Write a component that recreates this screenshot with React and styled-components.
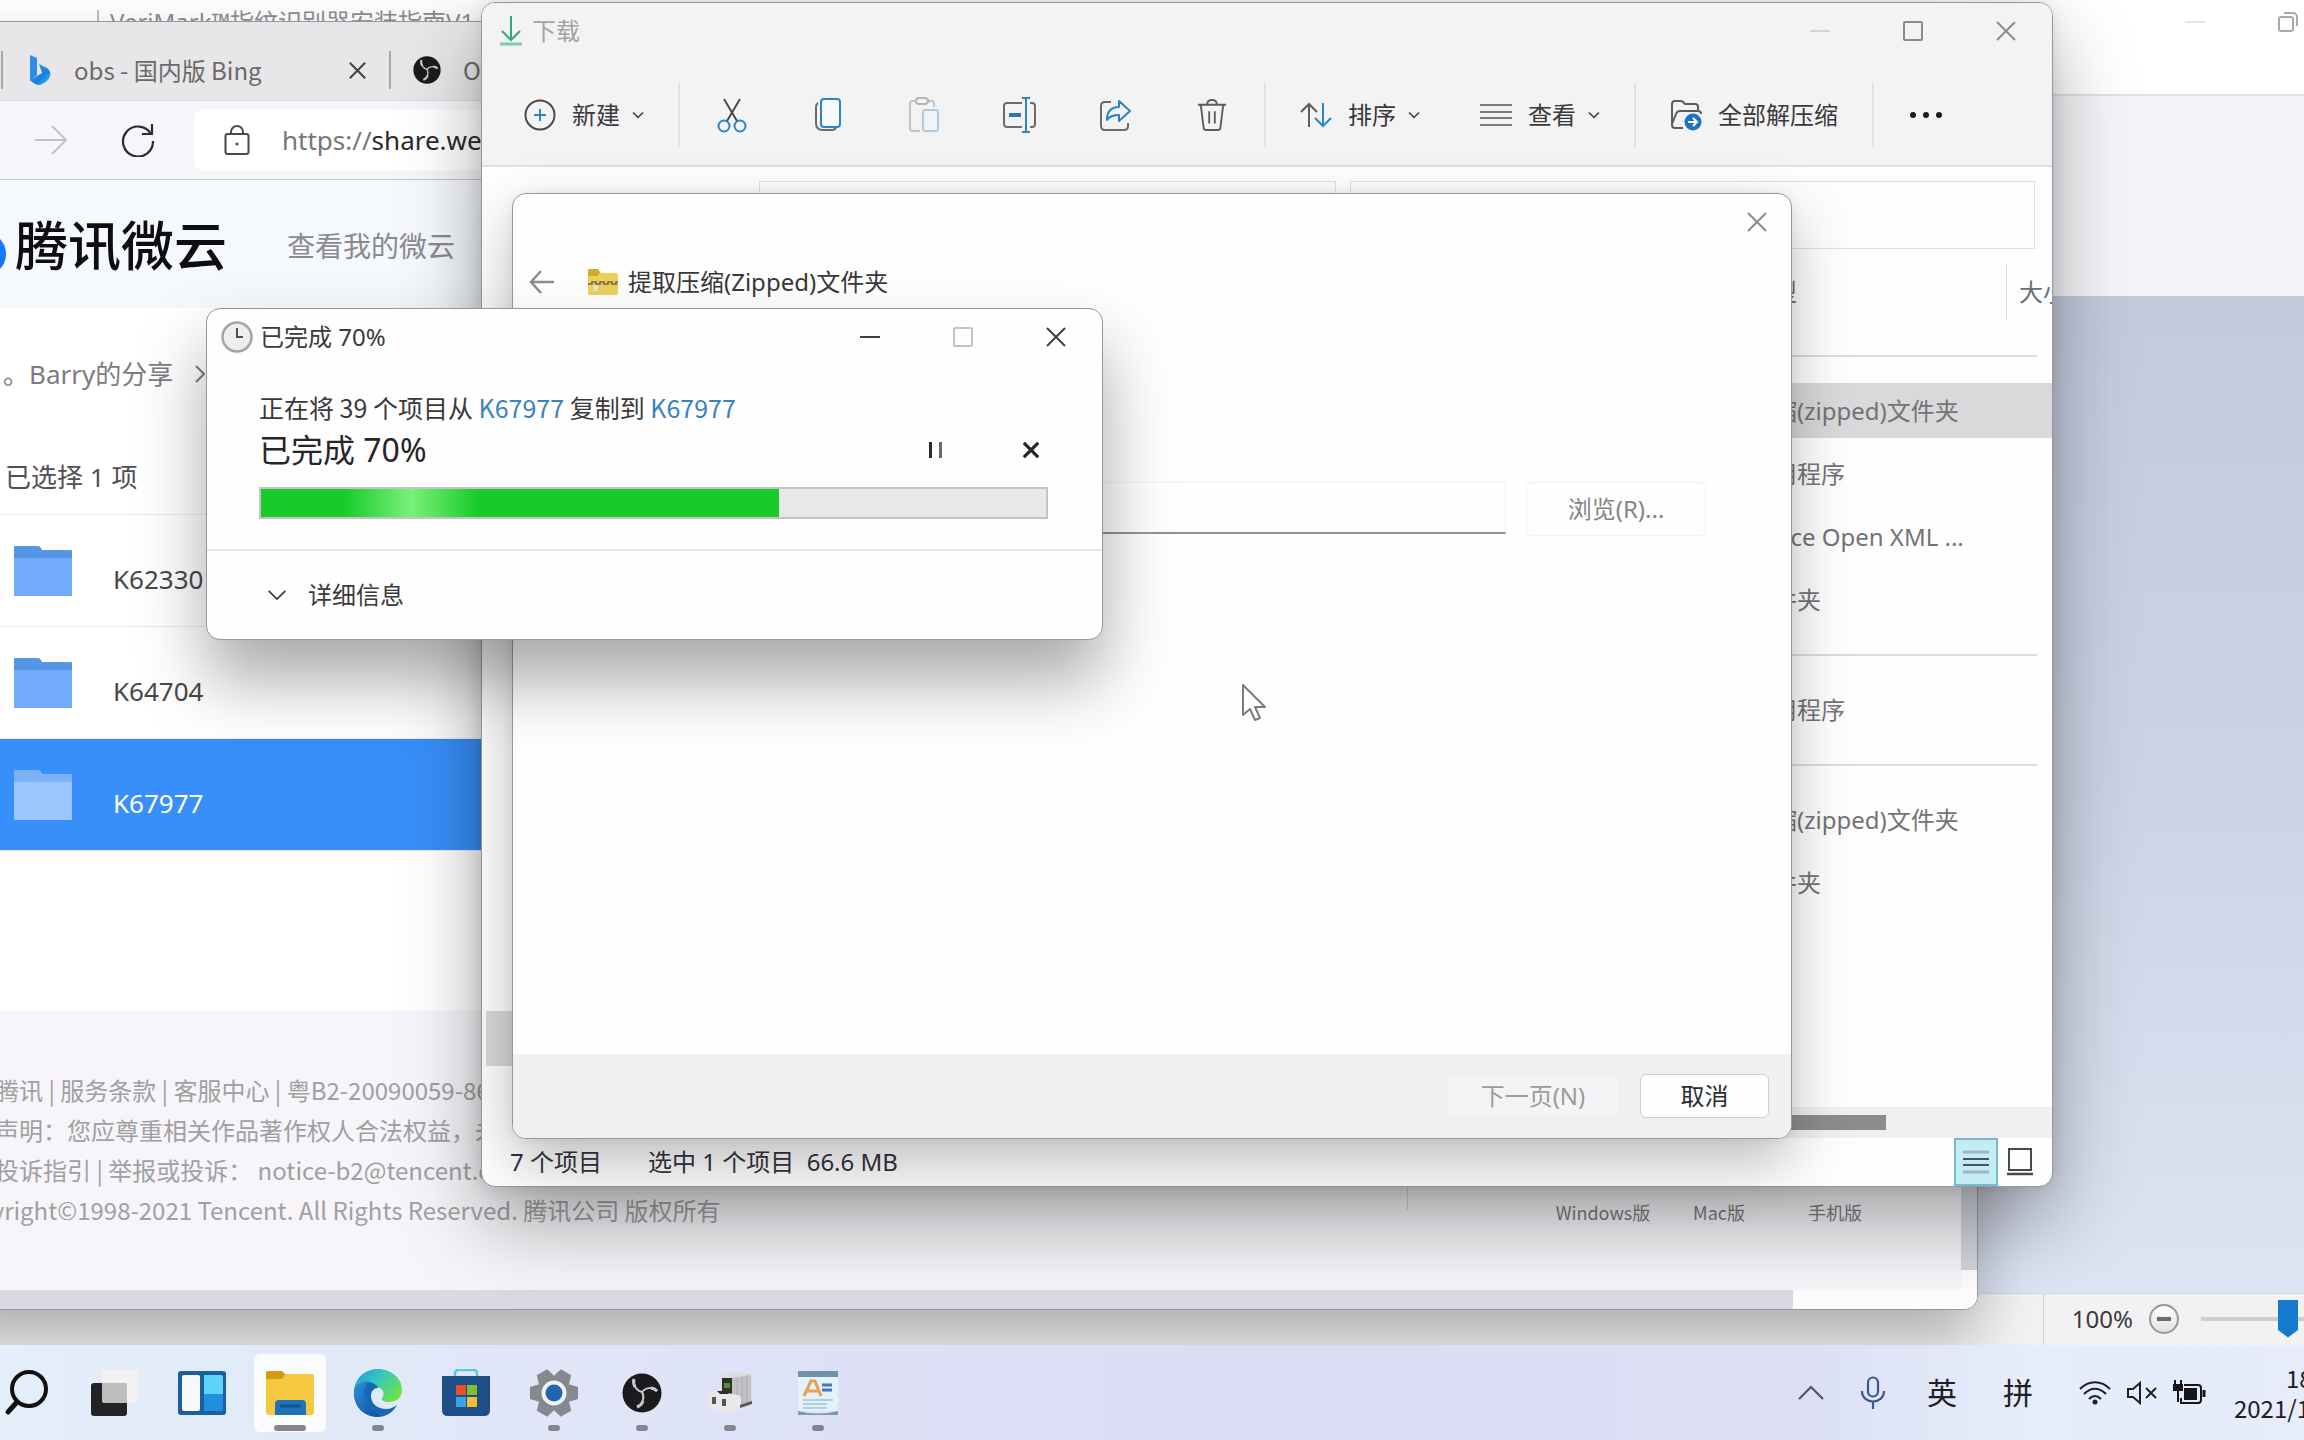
import styled, { createGlobalStyle, css } from "styled-components";

const FOLDERS = ["K62330", "K64704", "K67977"];

const GROUPS = [
  ["压缩(zipped)文件夹", "应用程序", "Office Open XML ...", "文件夹"],
  ["应用程序"],
  ["压缩(zipped)文件夹", "文件夹"],
];

/* ---------- icons ---------- */

const Minus = () => (
  <svg width="20" height="20" viewBox="0 0 20 20" fill="none" stroke="currentColor" strokeWidth="2">
    <path d="M0 10h20" />
  </svg>
);
const Square = () => (
  <svg width="20" height="20" viewBox="0 0 20 20" fill="none" stroke="currentColor" strokeWidth="2">
    <rect x="1" y="1" width="18" height="18" rx="1" />
  </svg>
);
const Restore = () => (
  <svg width="20" height="20" viewBox="0 0 20 20" fill="none" stroke="currentColor" strokeWidth="2">
    <rect x="1" y="5" width="14" height="14" rx="2" />
    <path d="M6 1h9a4 4 0 0 1 4 4v9" />
  </svg>
);
const Cross = ({ size = 20, weight = 2 }) => (
  <svg width={size} height={size} viewBox="0 0 20 20" fill="none" stroke="currentColor" strokeWidth={weight}>
    <path d="M1 1l18 18M19 1L1 19" />
  </svg>
);
const Chevron = ({ size = 12, weight = 1.5 }) => (
  <svg width={size} height={size} viewBox="0 0 12 12" fill="none" stroke="currentColor" strokeWidth={weight}>
    <path d="M1 3.5l5 5 5-5" />
  </svg>
);
const BingLogo = () => (
  <svg width="24" height="32" viewBox="0 0 24 32">
    <defs>
      <linearGradient id="bing" x1="0" y1="0" x2="1" y2="1">
        <stop offset="0" stopColor="#2fa8ef" />
        <stop offset="0.6" stopColor="#1b7fe0" />
        <stop offset="1" stopColor="#37c8f2" />
      </linearGradient>
    </defs>
    <path d="M2 1l7 3v17l-7 6z" fill="#2b8fe8" />
    <path d="M11 10l8 4c3 2 4 5 3 8-1 4-4 6-8 8-3 2-7 1-12-4l12-7-1-3z" fill="url(#bing)" />
  </svg>
);
const ObsLogo = ({ size = 28 }) => (
  <svg width={size} height={size} viewBox="0 0 40 40">
    <circle cx="20" cy="20" r="19.5" fill="#1b1a1c" />
    <g fill="none" stroke="#c9c7cb" strokeWidth="2">
      <path d="M20 19c-5-1-9-6-8-13" />
      <path d="M20 19c4-5 11-5 15-1" />
      <path d="M20 19c3 5 1 12-5 15" />
      <path d="M12 6c-1 3 0 6 1 8M35 18c-2-2-4-3-6-3M15 34c3-1 5-3 6-6" strokeWidth="3" />
    </g>
  </svg>
);
const ForwardArrow = () => (
  <svg width="32" height="30" viewBox="0 0 32 30" fill="none" stroke="#c4c2c6" strokeWidth="2">
    <path d="M0 15h31M17 1l14 14-14 14" />
  </svg>
);
const Reload = () => (
  <svg width="34" height="34" viewBox="0 0 34 34" fill="none" stroke="#2c2b2d" strokeWidth="2.2">
    <path d="M30 11A15 15 0 1 0 32 18" />
    <path d="M31 1v10H21" />
  </svg>
);
const Lock = () => (
  <svg width="26" height="32" viewBox="0 0 26 32" fill="none" stroke="#4a494b" strokeWidth="2">
    <rect x="1.500" y="10" width="23" height="20" rx="2" />
    <path d="M7 10V8a6 6 0 0 1 12 0v2" />
    <circle cx="13" cy="20" r="1.500" fill="#4a494b" stroke="none" />
  </svg>
);
const WeiyunLogo = () => (
  <svg width="60" height="60" viewBox="0 0 60 60">
    <circle cx="29" cy="38" r="22" fill="#1677ff" />
  </svg>
);
const BlueFolder = ({ faded }) => (
  <svg width="58" height="50" viewBox="0 0 58 50">
    <path d="M0 1q0-1 1-1h23q2 0 3 2l1 2h29q1 0 1 1v9H0z" fill={faded ? "#7db2f9" : "#5795e8"} />
    <path d="M0 12h58v37q0 1-1 1H1q-1 0-1-1z" fill={faded ? "#9cc4fd" : "#72abfb"} />
  </svg>
);
const DownloadArrow = () => (
  <svg width="22" height="30" viewBox="0 0 22 30" fill="none" stroke="#2fa884" strokeWidth="2">
    <path d="M11 0v24M2 15l9 9 9-9" />
    <path d="M0 28h22" stroke="#7fcab2" strokeWidth="3" />
  </svg>
);
const PlusCircle = () => (
  <svg width="32" height="32" viewBox="0 0 32 32" fill="none" strokeWidth="2">
    <circle cx="16" cy="16" r="14.500" stroke="#4a4a4a" />
    <path d="M16 10v12M10 16h12" stroke="#2a86c8" />
  </svg>
);
const Scissors = () => (
  <svg width="32" height="36" viewBox="0 0 32 36" fill="none" strokeWidth="2">
    <path d="M8 2l13 22M24 2L11 24" stroke="#4a4a4a" />
    <circle cx="8" cy="29" r="5.500" stroke="#2a86c8" />
    <circle cx="24" cy="29" r="5.500" stroke="#2a86c8" />
  </svg>
);
const Copy = () => (
  <svg width="28" height="36" viewBox="0 0 28 36" fill="none" strokeWidth="2">
    <path d="M4 6q-2 1-2 4v16q0 7 7 7h9q3 0 4-2" stroke="#6b6b6b" />
    <rect x="7" y="2" width="19" height="28" rx="3" stroke="#2a86c8" fill="#f8fbfd" />
  </svg>
);
const Paste = () => (
  <svg width="32" height="36" viewBox="0 0 32 36" fill="none" strokeWidth="2">
    <path d="M12 34H5q-3 0-3-3V7q0-3 3-3h3M20 4h4q2 0 2 3v3" stroke="#c2c2c2" />
    <rect x="8" y="1" width="12" height="6" rx="3" stroke="#b5b5b5" />
    <rect x="15" y="13" width="15" height="21" rx="2" stroke="#a9cbe0" />
  </svg>
);
const Rename = () => (
  <svg width="36" height="36" viewBox="0 0 36 36" fill="none" strokeWidth="2">
    <path d="M20 6H5Q2 6 2 9v18q0 3 3 3h15M28 6h2q3 0 3 3v18q0 3-3 3h-2" stroke="#6b6b6b" />
    <path d="M24 2v32M20 1h8M20 35h8" stroke="#2a86c8" />
    <path d="M7 18h12" stroke="#2a78b8" strokeWidth="4" />
  </svg>
);
const Share = () => (
  <svg width="34" height="36" viewBox="0 0 34 36" fill="none" strokeWidth="2" strokeLinejoin="round">
    <path d="M12 5H6Q2 5 2 9v20q0 4 4 4h19q4 0 4-4v-3" stroke="#6b6b6b" />
    <path d="M20 4l11 10-11 10v-6c-6 0-10 2-12 5 0-8 4-13 12-13z" stroke="#2f7fc4" />
  </svg>
);
const Trash = () => (
  <svg width="30" height="36" viewBox="0 0 32 36" fill="none" stroke="#5c5c5c" strokeWidth="2">
    <path d="M1 7h30M4 7l3 24q0 3 3 3h12q3 0 3-3l3-24M11 6q0-4 5-4t5 4M13 14v13M19 14v13" />
  </svg>
);
const SortArrows = () => (
  <svg width="32" height="26" viewBox="0 0 32 26" fill="none" strokeWidth="2">
    <path d="M9 25V2M1 10l8-8 8 8" stroke="#5c5c5c" />
    <path d="M23 1v23M15 16l8 8 8-8" stroke="#2a86c8" />
  </svg>
);
const Lines = () => (
  <svg width="32" height="24" viewBox="0 0 32 24" stroke="#7a7a7a" strokeWidth="2">
    <path d="M0 2h32M0 9h32M0 15h32M0 22h32" />
  </svg>
);
const ExtractFolder = () => (
  <svg width="32" height="32" viewBox="0 0 32 32" fill="none" strokeWidth="2">
    <path d="M13 29H5q-3 0-3-3V5q0-3 3-3h6q2 0 4 3h10q3 0 3 3v3M2 25l4-10q1-3 4-3h18q3 0 3 3" stroke="#5c5c5c" />
    <circle cx="23" cy="23" r="8.500" fill="#1e74bf" />
    <path d="M18 23h9M23 19l4 4-4 4" stroke="#fff" />
  </svg>
);
const Dots = () => (
  <svg width="34" height="8" viewBox="0 0 34 8" fill="#1c1c1c">
    <circle cx="4" cy="4" r="3" />
    <circle cx="17" cy="4" r="3" />
    <circle cx="30" cy="4" r="3" />
  </svg>
);
const BackArrow = () => (
  <svg width="26" height="24" viewBox="0 0 26 24" fill="none" stroke="#8e8d8f" strokeWidth="2.500">
    <path d="M25 12H2M12 1L2 12l10 11" />
  </svg>
);
const ZipFolder = () => (
  <svg width="32" height="26" viewBox="0 0 32 26">
    <path d="M1 2q0-2 2-2h8l3 4h15q2 0 2 2v18q0 2-2 2H3q-2 0-2-2z" fill="#ecd25c" />
    <path d="M1 2q0-2 2-2h8l2 4-3 3H1z" fill="#d5a92a" />
    <path d="M1 15h4v-2h4v2h4v-2h4v2h4v-2h4v2h4v-2h2" fill="none" stroke="#8d8245" strokeWidth="2" />
    <path d="M6 16h5v6H6z" fill="#e6e2d0" />
  </svg>
);
const Clock = () => (
  <svg width="32" height="32" viewBox="0 0 32 32" fill="none">
    <circle cx="16" cy="16" r="14.500" fill="#efeeee" stroke="#a5a4a4" strokeWidth="2.500" />
    <path d="M16 7v9h6" stroke="#4e4d4f" strokeWidth="2" />
  </svg>
);
const Pause = () => (
  <svg width="18" height="18" viewBox="0 0 18 18">
    <path d="M2 1h3v16H2z" fill="#2a2a2a" />
    <path d="M12 1h3v16h-3z" fill="#6c6a6e" />
  </svg>
);
const LargeView = () => (
  <svg width="26" height="28" viewBox="0 0 26 28" fill="none" stroke="#4a4a4a" strokeWidth="2">
    <rect x="2" y="1" width="22" height="21" />
    <path d="M0 26h26" strokeWidth="2.500" />
  </svg>
);
const DetailView = () => (
  <svg width="26" height="26" viewBox="0 0 26 26" strokeWidth="2">
    <path d="M0 3h26M0 23h26" stroke="#9db7bc" strokeWidth="3" />
    <path d="M0 10h26M0 16h26" stroke="#3f5961" />
  </svg>
);
const Pointer = () => (
  <svg width="26" height="40" viewBox="0 0 26 40">
    <path d="M2 2v30l7-6 5 11 5-2-5-11h10z" fill="#fff" stroke="#7d7b7f" strokeWidth="2" strokeLinejoin="round" />
  </svg>
);

const SearchIcon = () => (
  <svg width="48" height="48" viewBox="0 0 48 48" fill="none" stroke="#101012" strokeLinecap="round">
    <circle cx="27" cy="20" r="17" strokeWidth="4" />
    <path d="M15 33L6 43" strokeWidth="5" />
  </svg>
);
const TaskViewIcon = () => (
  <svg width="48" height="48" viewBox="0 0 48 48">
    <rect x="1" y="14" width="36" height="33" rx="3" fill="#232324" />
    <rect x="12" y="1" width="36" height="33" rx="3" fill="#f2f2f2" />
    <path d="M12 14h25v20H15q-3 0-3-3z" fill="#bdbdbd" />
  </svg>
);
const WidgetsIcon = () => (
  <svg width="48" height="48" viewBox="0 0 48 48">
    <rect x="0" y="2" width="48" height="44" rx="3" fill="#1b5f9e" />
    <rect x="4" y="6" width="18" height="36" rx="2" fill="#f6f8fb" />
    <path d="M26 6h17q2 0 2 2v17H26z" fill="#5cd3fb" />
    <path d="M26 25h19v15q0 2-2 2H26z" fill="#1f8fe0" />
  </svg>
);
const FilesIcon = () => (
  <svg width="48" height="48" viewBox="0 0 48 48">
    <path d="M0 4q0-2 2-2h14l4 4v8H0z" fill="#d49a12" />
    <path d="M0 10h16l4-5h26q2 0 2 2v36q0 3-3 3H3q-3 0-3-3z" fill="#f4c93f" />
    <path d="M9 46V35q0-4 4-4h23q4 0 4 4v11z" fill="#1f74b9" />
    <path d="M14 37h21" stroke="#145590" strokeWidth="3" />
  </svg>
);
const EdgeIcon = () => (
  <svg width="50" height="48" viewBox="0 0 50 48">
    <defs>
      <linearGradient id="edgeTop" x1="0" y1="0" x2="1" y2="0.600">
        <stop offset="0" stopColor="#1f94d6" />
        <stop offset="0.500" stopColor="#35c8c0" />
        <stop offset="1" stopColor="#6be04c" />
      </linearGradient>
      <linearGradient id="edgeLow" x1="0" y1="0" x2="1" y2="1">
        <stop offset="0" stopColor="#2c8fe0" />
        <stop offset="1" stopColor="#0e4d90" />
      </linearGradient>
    </defs>
    <path d="M1 22C2 8 13 0 25 0c14 0 24 10 24 21 0 8-6 12-13 12-5 0-8-2-7-4 3-3 2-10-5-11C14 15 5 15 1 22z" fill="url(#edgeTop)" />
    <path d="M1 24c0-8 8-12 15-11 5 1 9 4 9 6-4 0-7 3-7 8 0 8 7 13 15 13 5 0 8-2 11-4-4 8-12 12-19 12C11 48 1 38 1 24z" fill="#1668b4" />
    <path d="M1 24c0-8 8-12 15-11-6 4-6 14-2 21 4 7 8 11 15 13C13 50 1 38 1 24z" fill="url(#edgeLow)" />
  </svg>
);
const StoreIcon = () => (
  <svg width="48" height="48" viewBox="0 0 48 48">
    <path d="M13 9V4q0-3 3-3h16q3 0 3 3v5" fill="none" stroke="#5cc8e8" strokeWidth="2.500" />
    <path d="M0 7h48v34q0 6-6 6H6q-6 0-6-6z" fill="#1d4f86" />
    <path d="M14 16h10v10H14z" fill="#e8502b" />
    <path d="M25 16h10v10H25z" fill="#84bd2e" />
    <path d="M14 28h10v10H14z" fill="#35a5e8" />
    <path d="M25 28h10v10H25z" fill="#f5bd35" />
  </svg>
);
const GearIcon = () => (
  <svg width="50" height="48" viewBox="-25 -24 50 48">
    <g fill="#85898f">
      {[30, 90, 150].map((a) => (
        <path key={a} d="M-9-14l3-10H6l3 10v28L6 24H-6l-3-10z" transform={`rotate(${a})`} />
      ))}
      <circle r="17" />
    </g>
    <circle r="12.500" fill="#eef1f6" />
    <circle r="8.500" fill="#1f66ac" />
  </svg>
);
const DeviceIcon = () => (
  <svg width="48" height="48" viewBox="0 0 48 48">
    <path d="M15 9q0-2 3-3l12-3 14 2q2 1 2 3v26l-16 6-15-6z" fill="#dcdbdd" />
    <path d="M26 9l18-3q1 0 1 2v26l-19 6z" fill="#c3c1c5" />
    <path d="M31 9v28M36 8v28M41 7v27" stroke="#aeacb0" strokeWidth="1" />
    <path d="M16 9h10v17H16z" fill="#2c3527" />
    <path d="M18 14h6v5h-6z" fill="#5d8a38" />
    <path d="M1 27q0-2 3-3l7-2 21 4q3 1 3 3v11l-12 5q-4 0-8-2L1 38z" fill="#e9e8ea" />
    <path d="M6 28h4v7H6zM16 30h4v7h-4z" fill="#57555a" />
    <path d="M34 36l12-4v3l-12 4z" fill="#57555a" />
    <path d="M11 22h9l3 3h-9z" fill="#2d2c30" />
  </svg>
);
const WordPadIcon = () => (
  <svg width="42" height="46" viewBox="0 0 42 46">
    <path d="M1 1h40v40H1z" fill="#e3f1f8" />
    <path d="M1 1h40v6H1z" fill="#6f93ad" />
    <path d="M7 26l7-15h4l6 15M10 21h11" fill="none" stroke="#e8a052" strokeWidth="3" />
    <path d="M25 15h10M25 20h10" stroke="#4778b5" strokeWidth="3" />
    <path d="M6 30h30M6 34h24M6 38h24" stroke="#a7c2cf" strokeWidth="1.500" />
    <path d="M1 41q20 5 40 0v4H1z" fill="#7b9bb0" />
  </svg>
);
const MicIcon = () => (
  <svg width="26" height="34" viewBox="0 0 26 34" fill="none" stroke="#3c5596" strokeWidth="2.200">
    <rect x="8" y="1.500" width="10" height="19" rx="5" />
    <path d="M2 15c0 14 22 14 22 0M13 26v7" />
  </svg>
);
const WifiIcon = () => (
  <svg width="34" height="26" viewBox="0 0 34 26" fill="none" stroke="#202024" strokeWidth="2.200">
    <path d="M2 9c9-9 21-9 30 0M6 14c7-7 15-7 22 0M11 19c4-4 8-4 12 0" />
    <circle cx="17" cy="22" r="2.500" fill="#202024" stroke="none" />
  </svg>
);
const MuteIcon = () => (
  <svg width="32" height="24" viewBox="0 0 32 24" fill="none" stroke="#202024" strokeWidth="2">
    <path d="M2 8h5l7-6v20l-7-6H2zM20 7l10 10M30 7L20 17" />
  </svg>
);
const BatteryIcon = () => (
  <svg width="34" height="26" viewBox="0 0 34 26" fill="none" stroke="#15151a" strokeWidth="2">
    <path d="M12 5h14q3 0 3 3v12q0 3-3 3H9v-5" />
    <path d="M13 9h11v10H13z" fill="#15151a" />
    <path d="M32 10v7" strokeWidth="3" />
    <path d="M2 5h8v5H2zM6 10v12M3 0v5M9 0v5" fill="#15151a" />
  </svg>
);

/* ---------- windows ---------- */

const WordWindow = () => (
  <WordFrame>
    <WordTitleBar>
      <WordTitle>｜VeriMark™指纹识别器安装指南V1</WordTitle>
      <WindowControls $color="#a9a9ab">
        <ControlButton $faint aria-label="最小化"><Minus /></ControlButton>
        <ControlButton aria-label="还原"><Restore /></ControlButton>
        <ControlButton aria-label="关闭"><Cross /></ControlButton>
      </WindowControls>
    </WordTitleBar>
    <WordRibbon />
    <WordCanvas />
    <WordStatusBar>
      <ZoomArea>
        <label htmlFor="zoom">100%</label>
        <ZoomOut aria-label="缩小">
          <svg width="14" height="4"><rect width="14" height="4" fill="#6b6b6b" /></svg>
        </ZoomOut>
        <ZoomSlider id="zoom" type="range" min="10" max="190" defaultValue="100" />
      </ZoomArea>
    </WordStatusBar>
  </WordFrame>
);

const BrowserWindow = () => (
  <BrowserFrame>
    <TabBar>
      <Tab>
        <BingLogo />
        <TabTitle>obs - 国内版 Bing</TabTitle>
        <PlainButton aria-label="关闭标签页"><Cross size={17} weight={2.5} /></PlainButton>
      </Tab>
      <NextTab>
        <ObsLogo />
        <TabTitle>OBS</TabTitle>
      </NextTab>
    </TabBar>
    <BrowserToolbar>
      <PlainButton aria-label="前进"><ForwardArrow /></PlainButton>
      <PlainButton aria-label="刷新"><Reload /></PlainButton>
      <AddressBar>
        <Lock />
        <Url><span>https://</span>share.weiyun.com</Url>
      </AddressBar>
    </BrowserToolbar>
    <BrowserBody>
      <Page>
        <PageHeader>
          <WeiyunLogo />
          <Brand>腾讯微云</Brand>
          <HeaderLink href="#">查看我的微云</HeaderLink>
        </PageHeader>
        <Breadcrumb>
          。Barry的分享
          <svg width="10" height="18" viewBox="0 0 10 18" fill="none" stroke="#7d7c7e" strokeWidth="2">
            <path d="M1 1l8 8-8 8" />
          </svg>
        </Breadcrumb>
        <SelectionInfo>已选择 1 项</SelectionInfo>
        <FolderList>
          {FOLDERS.map((name) => (
            <FolderRow key={name} $selected={name === "K67977"}>
              <BlueFolder faded={name === "K67977"} />
              <FolderName>{name}</FolderName>
            </FolderRow>
          ))}
        </FolderList>
        <PageFooter>
          <FooterText>
            <p>关于腾讯 | 服务条款 | 客服中心 | 粤B2-20090059-86</p>
            <p>版权声明：您应尊重相关作品著作权人合法权益，未</p>
            <p>侵权投诉指引 | 举报或投诉： notice-b2@tencent.com</p>
            <p>Copyright©1998-2021 Tencent. All Rights Reserved. 腾讯公司 版权所有</p>
          </FooterText>
          <FooterDivider />
          <Downloads>
            <a href="#">Windows版</a>
            <a href="#">Mac版</a>
            <a href="#">手机版</a>
          </Downloads>
        </PageFooter>
      </Page>
      <VerticalTrack><VerticalThumb /></VerticalTrack>
    </BrowserBody>
    <HorizontalTrack><HorizontalThumb /></HorizontalTrack>
  </BrowserFrame>
);

const ExplorerWindow = () => (
  <ExplorerFrame>
    <ExplorerTop>
      <ExplorerTitleBar>
        <DownloadArrow />
        <span>下载</span>
        <WindowControls $color="#8b8b8d">
          <ControlButton $faint aria-label="最小化"><Minus /></ControlButton>
          <ControlButton aria-label="最大化"><Square /></ControlButton>
          <ControlButton aria-label="关闭"><Cross /></ControlButton>
        </WindowControls>
      </ExplorerTitleBar>
      <CommandBar>
        <MenuButton><PlusCircle /><span>新建</span><Chevron /></MenuButton>
        <CommandDivider />
        <IconButton aria-label="剪切"><Scissors /></IconButton>
        <IconButton aria-label="复制"><Copy /></IconButton>
        <IconButton aria-label="粘贴"><Paste /></IconButton>
        <IconButton aria-label="重命名"><Rename /></IconButton>
        <IconButton aria-label="共享"><Share /></IconButton>
        <IconButton aria-label="删除"><Trash /></IconButton>
        <CommandDivider />
        <MenuButton><SortArrows /><span>排序</span><Chevron /></MenuButton>
        <MenuButton><Lines /><span>查看</span><Chevron /></MenuButton>
        <CommandDivider />
        <MenuButton><ExtractFolder /><span>全部解压缩</span></MenuButton>
        <CommandDivider />
        <IconButton aria-label="更多"><Dots /></IconButton>
      </CommandBar>
    </ExplorerTop>
    <LocationRow>
      <LocationInput aria-label="地址" />
      <LocationInput aria-label="搜索" $search />
    </LocationRow>
    <ExplorerMain>
      <Sidebar><SidebarItem /></Sidebar>
      <FilePane>
        <FileTable>
          <colgroup>
            <col />
            <TypeCol />
            <SizeCol />
          </colgroup>
          <thead>
            <tr>
              <HeadCell />
              <HeadCell><span>类型</span></HeadCell>
              <HeadCell $divided><span>大小</span></HeadCell>
            </tr>
          </thead>
          {GROUPS.map((types, g) => (
            <tbody key={g}>
              <tr>
                <GroupCell colSpan={3}><GroupLine /></GroupCell>
              </tr>
              {types.map((type, i) => (
                <FileRow key={i} $selected={g === 0 && i === 0}>
                  <td />
                  <td>{type}</td>
                  <td />
                </FileRow>
              ))}
            </tbody>
          ))}
        </FileTable>
        <FileTrack><FileThumb /></FileTrack>
      </FilePane>
    </ExplorerMain>
    <ExplorerStatus>
      <span>7 个项目</span>
      <span>选中 1 个项目&nbsp; 66.6 MB</span>
      <ViewButtons>
        <ViewButton $active aria-label="详细信息"><DetailView /></ViewButton>
        <ViewButton aria-label="大图标"><LargeView /></ViewButton>
      </ViewButtons>
    </ExplorerStatus>
  </ExplorerFrame>
);

const ExtractWizard = () => (
  <WizardFrame>
    <WizardTitleBar>
      <WindowControls $color="#8b8b8d">
        <ControlButton $narrow aria-label="关闭"><Cross /></ControlButton>
      </WindowControls>
    </WizardTitleBar>
    <WizardHeader>
      <PlainButton aria-label="返回"><BackArrow /></PlainButton>
      <WizardTitle><ZipFolder />提取压缩(Zipped)文件夹</WizardTitle>
    </WizardHeader>
    <WizardBody>
      <PathInput aria-label="目标文件夹" />
      <BrowseButton>浏览(R)...</BrowseButton>
    </WizardBody>
    <WizardFooter>
      <NextButton disabled>下一页(N)</NextButton>
      <CancelButton>取消</CancelButton>
    </WizardFooter>
  </WizardFrame>
);

const CopyDialog = ({ filled = 66 }) => (
  <CopyFrame>
    <CopyTitleBar>
      <Clock />
      <span>已完成 70%</span>
      <WindowControls $color="#3f3e40">
        <ControlButton aria-label="最小化"><Minus /></ControlButton>
        <ControlButton $faint aria-label="最大化"><Square /></ControlButton>
        <ControlButton aria-label="关闭"><Cross /></ControlButton>
      </WindowControls>
    </CopyTitleBar>
    <CopyBody>
      <CopySummary>
        正在将 39 个项目从 <a href="#">K67977</a> 复制到 <a href="#">K67977</a>
      </CopySummary>
      <CopyStatus>
        <span id="copy-progress">已完成 70%</span>
        <CopyActions>
          <PlainButton aria-label="暂停"><Pause /></PlainButton>
          <PlainButton aria-label="取消"><Cross size={16} weight={4} /></PlainButton>
        </CopyActions>
      </CopyStatus>
      <ProgressTrack role="progressbar" aria-labelledby="copy-progress" aria-valuenow={70}>
        <ProgressFill style={{ width: `${filled}%` }} />
      </ProgressTrack>
    </CopyBody>
    <DetailsButton><Chevron size={20} weight={1} />详细信息</DetailsButton>
  </CopyFrame>
);

const Taskbar = () => (
  <TaskbarStyled>
    <TaskButton aria-label="搜索"><SearchIcon /></TaskButton>
    <TaskButton aria-label="任务视图"><TaskViewIcon /></TaskButton>
    <TaskButton aria-label="小组件"><WidgetsIcon /></TaskButton>
    <TaskButton aria-label="文件资源管理器" $running $active><FilesIcon /></TaskButton>
    <TaskButton aria-label="Edge" $running><EdgeIcon /></TaskButton>
    <TaskButton aria-label="应用商店"><StoreIcon /></TaskButton>
    <TaskButton aria-label="设置" $running><GearIcon /></TaskButton>
    <TaskButton aria-label="OBS" $running><ObsLogo size={40} /></TaskButton>
    <TaskButton aria-label="设备" $running><DeviceIcon /></TaskButton>
    <TaskButton aria-label="写字板" $running><WordPadIcon /></TaskButton>
    <Tray>
      <TrayButton aria-label="显示隐藏的图标">
        <svg width="26" height="16" viewBox="0 0 26 16" fill="none" stroke="#55555c" strokeWidth="2.200">
          <path d="M1 14L13 2l12 12" />
        </svg>
      </TrayButton>
      <TrayButton aria-label="麦克风"><MicIcon /></TrayButton>
      <LanguageButton>英</LanguageButton>
      <LanguageButton>拼</LanguageButton>
      <SystemButton aria-label="网络、音量和电池">
        <WifiIcon />
        <MuteIcon />
        <BatteryIcon />
      </SystemButton>
      <ClockButton>
        <span>18:52</span>
        <span>2021/11/9</span>
      </ClockButton>
    </Tray>
  </TaskbarStyled>
);

const App = () => (
  <Screen>
    <GlobalStyle />
    <Desktop>
      <WordWindow />
      <BrowserWindow />
      <ExplorerWindow />
      <ExtractWizard />
      <CopyDialog />
      <PointerStyled><Pointer /></PointerStyled>
    </Desktop>
    <Taskbar />
  </Screen>
);

const GlobalStyle = createGlobalStyle`
  * {
    box-sizing: border-box;
  }
  body {
    margin: 0;
    overflow: hidden;
    font-family: "Noto Sans", "Noto Sans CJK SC", sans-serif;
    font-size: 24px;
    line-height: 36px;
    color: #3a393b;
  }
  button, input {
    font: inherit;
    color: inherit;
  }
  button {
    padding: 0;
    border: 0;
    background: none;
    white-space: nowrap;
  }
  svg {
    display: block;
    flex-shrink: 0;
  }
  p {
    margin: 0;
  }
  a {
    color: inherit;
    text-decoration: none;
  }
`;

const Screen = styled.div`
  display: flex;
  flex-direction: column;
  height: 100vh;
  overflow: hidden;
`;

const Desktop = styled.main`
  position: relative;
  flex: 1;
  overflow: hidden;
`;

const Frame = styled.section`
  position: absolute;
  display: flex;
  flex-direction: column;
  overflow: hidden;
  border: 1px solid #98979a;
  border-radius: 14px;
  background: #fefefe;
`;

const PlainButton = styled.button`
  display: flex;
  align-items: center;
  justify-content: center;
`;

const WindowControls = styled.div`
  display: flex;
  align-self: stretch;
  margin-left: auto;
  color: ${(p) => p.$color};
`;

const ControlButton = styled(PlainButton)`
  width: ${(p) => (p.$narrow ? 68 : 93)}px;
  opacity: ${(p) => (p.$faint ? 0.3 : 1)};
`;

/* word processor, behind everything */

const WordFrame = styled(Frame)`
  inset: 0 -123px 0 0;
  border: 0;
  border-radius: 0;
`;

const WordTitleBar = styled.header`
  display: flex;
  flex-shrink: 0;
  height: 96px;
  border-bottom: 2px solid #e3e1e5;
  background: #fff;

  ${WindowControls} {
    height: 44px;
  }
`;

const WordTitle = styled.span`
  padding-left: 86px;
  line-height: 44px;
  color: #8d8c94;
`;

const WordRibbon = styled.div`
  height: 200px;
  flex-shrink: 0;
  background: #f6f4f8;
`;

const WordCanvas = styled.div`
  flex: 1;
  background: linear-gradient(#c4cade, #cdd3e5 50%, #dde4f3);
`;

const WordStatusBar = styled.footer`
  display: flex;
  justify-content: flex-end;
  height: 52px;
  flex-shrink: 0;
  border-top: 1px solid #d5d8e0;
  background: #f2f1f3;
`;

const ZoomArea = styled.div`
  display: flex;
  align-items: center;
  padding: 0 52px 2px 28px;
  border-left: 1px solid #d0cfd1;
`;

const ZoomOut = styled(PlainButton)`
  width: 30px;
  height: 30px;
  margin: 0 22px 0 16px;
  border: 2px solid #979698;
  border-radius: 50%;
  background: linear-gradient(#fff, #e2e1e2);
`;

const ZoomSlider = styled.input`
  width: 174px;
  height: 40px;
  margin: 0;
  appearance: none;
  background: linear-gradient(#cfcdd0, #cfcdd0) center / 100% 4px no-repeat;

  &::-webkit-slider-thumb {
    appearance: none;
    width: 20px;
    height: 38px;
    background: #147bd1;
    clip-path: polygon(0 0, 100% 0, 100% 80%, 50% 100%, 0 80%);
  }
`;

/* browser */

const BrowserFrame = styled(Frame)`
  inset: 21px 326px 35px -60px;
  background: #f7f5f9;
  box-shadow: 0 30px 60px rgba(0, 0, 0, 0.28);
`;

const TabBar = styled.div`
  display: flex;
  align-items: center;
  height: 79px;
  flex-shrink: 0;
  padding: 18px 0 0 60px;
  border-bottom: 1px solid #dad8db;
  background: #e9e6e9;
`;

const Tab = styled.div`
  display: flex;
  align-items: center;
  width: 390px;
  height: 38px;
  padding: 0 23px 0 25px;
  border-left: 2px solid #a9a7aa;
  border-right: 2px solid #a9a7aa;
  color: #454446;
`;

const TabTitle = styled.span`
  flex: 1;
  padding-left: 22px;
  font-family: "Noto Sans CJK SC", sans-serif;
  color: #6a696b;
`;

const NextTab = styled.div`
  display: flex;
  align-items: center;
  padding-left: 22px;
`;

const BrowserToolbar = styled.div`
  display: flex;
  align-items: center;
  gap: 54px;
  height: 79px;
  flex-shrink: 0;
  padding-left: 94px;
  border-bottom: 1px solid #c4c3c6;
`;

const AddressBar = styled.div`
  display: flex;
  flex: 1;
  align-items: center;
  gap: 32px;
  height: 60px;
  margin-left: -15px;
  padding-left: 30px;
  border-radius: 8px;
  background: #fff;
`;

const Url = styled.span`
  font-size: 26px;
  color: #2b2a2c;

  span {
    color: #777678;
  }
`;

const BrowserBody = styled.div`
  display: flex;
  flex: 1;
  min-height: 0;
`;

const Page = styled.div`
  display: flex;
  flex: 1;
  flex-direction: column;
  min-width: 0;
  background: #fff;
  white-space: nowrap;
`;

const PageHeader = styled.header`
  display: flex;
  align-items: center;
  height: 128px;
  padding: 3px 0 0 14px;
  background: #f5f8fc;
`;

const Brand = styled.span`
  font-size: 53px;
  line-height: 64px;
  font-weight: 500;
  color: #0e0e10;
`;

const HeaderLink = styled.a`
  padding-left: 60px;
  font-size: 28px;
  color: #8b8b8d;
`;

const Breadcrumb = styled.nav`
  display: flex;
  align-items: center;
  gap: 22px;
  height: 132px;
  padding-left: 62px;
  font-size: 26px;
  color: #7d7c7e;
`;

const SelectionInfo = styled.div`
  height: 75px;
  padding-left: 64px;
  border-bottom: 1px solid #ececef;
  font-size: 26px;
  line-height: 74px;
  color: #515052;
`;

const FolderList = styled.ul`
  flex: 1;
  margin: 0;
  padding: 0;
  list-style: none;
`;

const FolderRow = styled.li`
  display: flex;
  align-items: center;
  gap: 41px;
  height: 112px;
  padding-left: 73px;
  border-bottom: 1px solid #ececef;
  font-size: 26px;
  color: #49484a;

  ${(p) =>
    p.$selected &&
    css`
      background: #388ff9;
      color: #fff;
    `}
`;

const FolderName = styled.span`
  padding-top: 16px;
`;

const PageFooter = styled.footer`
  display: flex;
  height: 280px;
  padding: 60px 68px 0 6px;
  background: #f7f5f9;
  font-family: "Noto Sans CJK SC", sans-serif;
  line-height: 40px;
  color: #a09fa2;
`;

const FooterText = styled.div`
  flex: 1;
`;

const FooterDivider = styled.div`
  width: 1px;
  height: 140px;
  margin-right: 137px;
  background: #d6d4d8;
`;

const Downloads = styled.div`
  display: grid;
  grid-template-columns: repeat(3, 116px);
  align-items: end;
  height: 162px;
  font-size: 18px;
  text-align: center;
  color: #7d7b7f;
`;

const VerticalTrack = styled.div`
  width: 16px;
  background: #fdfdfe;
`;

const VerticalThumb = styled.div`
  height: calc(100% - 20px);
  background: #d3d4dd;
`;

const HorizontalTrack = styled.div`
  height: 19px;
  flex-shrink: 0;
  background: #fdfdfe;
`;

const HorizontalThumb = styled.div`
  height: 100%;
  margin-right: 184px;
  background: #dadae4;
`;

/* file explorer */

const ExplorerFrame = styled(Frame)`
  inset: 2px 251px 158px 481px;
  box-shadow: 0 0 16px rgba(0, 0, 0, 0.1), 0 36px 80px rgba(0, 0, 0, 0.34);
`;

const ExplorerTop = styled.header`
  flex-shrink: 0;
  border-bottom: 2px solid #e0dfe1;
  background: #f3f3f4;
`;

const ExplorerTitleBar = styled.div`
  display: flex;
  align-items: center;
  gap: 10px;
  height: 56px;
  padding-left: 18px;
  color: #a3a2a4;
`;

const CommandBar = styled.div`
  display: flex;
  align-items: center;
  padding: 24px 12px 18px;
`;

const CommandDivider = styled.div`
  width: 2px;
  height: 64px;
  margin: 0 4px;
  background: #e2e1e3;
`;

const MenuButton = styled(PlainButton)`
  padding: 0 30px;

  span {
    padding-left: 16px;
  }

  svg:last-child {
    margin-left: 12px;
  }
`;

const IconButton = styled(PlainButton)`
  width: 96px;
  height: 64px;
`;

const LocationRow = styled.div`
  display: flex;
  gap: 14px;
  padding: 14px 17px 0 277px;
`;

const LocationInput = styled.input`
  flex: ${(p) => (p.$search ? "0 0 685px" : "1")};
  min-width: 0;
  height: 68px;
  border: 1px solid #dfdde0;
  background: #fefdfe;
`;

const ExplorerMain = styled.div`
  display: flex;
  flex: 1;
  min-height: 0;
`;

const Sidebar = styled.div`
  display: flex;
  flex-direction: column;
  justify-content: flex-end;
  width: 276px;
  padding: 0 0 72px 4px;
`;

const SidebarItem = styled.div`
  height: 55px;
  background: #d9d8da;
`;

const FilePane = styled.div`
  display: flex;
  flex: 1;
  flex-direction: column;
  justify-content: space-between;
  min-width: 0;
  padding-top: 14px;
`;

const FileTable = styled.table`
  width: 100%;
  table-layout: fixed;
  border-collapse: collapse;
  white-space: nowrap;
  color: #747376;

  td {
    padding: 0;
  }
`;

const TypeCol = styled.col`
  width: 257px;
`;

const SizeCol = styled.col`
  width: 46px;
`;

const HeadCell = styled.th`
  height: 69px;
  padding: 0;
  vertical-align: top;
  font-weight: 400;
  text-align: left;
  color: #66707c;

  span {
    display: block;
    padding-left: ${(p) => (p.$divided ? 12 : 0)}px;
    border-left: ${(p) => (p.$divided ? "1px solid #dcdbde" : "0")};
    line-height: 58px;
  }
`;

const GroupCell = styled.td`
  height: 47px;
`;

const GroupLine = styled.div`
  height: 2px;
  margin-right: 15px;
  background: #dddbdf;
`;

const FileRow = styled.tr`
  height: 63px;

  ${(p) =>
    p.$selected &&
    css`
      td {
        background: linear-gradient(#d9d8da, #d9d8da) center / 100% 55px no-repeat;
      }
    `}
`;

const FileTrack = styled.div`
  height: 31px;
  padding: 8px 166px 8px 0;
  background: #f1eff2;
`;

const FileThumb = styled.div`
  height: 15px;
  background: #8c8c8c;
`;

const ExplorerStatus = styled.footer`
  display: flex;
  gap: 46px;
  height: 48px;
  flex-shrink: 0;
  padding: 0 10px 0 28px;
  line-height: 48px;
  color: #33323f;
`;

const ViewButtons = styled.div`
  display: flex;
  margin-left: auto;
`;

const ViewButton = styled(PlainButton)`
  width: 44px;
  border: 2px solid ${(p) => (p.$active ? "#74bccd" : "transparent")};
  background: ${(p) => (p.$active ? "#c4ecf5" : "none")};
`;

/* extract wizard */

const WizardFrame = styled(Frame)`
  inset: 193px 512px 206px 512px;
  box-shadow: 0 0 12px rgba(0, 0, 0, 0.06), 0 24px 60px rgba(0, 0, 0, 0.26);
`;

const WizardTitleBar = styled.div`
  display: flex;
  height: 56px;
`;

const WizardHeader = styled.div`
  display: flex;
  align-items: center;
  gap: 32px;
  height: 64px;
  padding-left: 16px;
`;

const WizardTitle = styled.h1`
  display: flex;
  align-items: center;
  gap: 9px;
  margin: 0;
  font-size: 24px;
  font-weight: 400;
  color: #39383a;
`;

const WizardBody = styled.div`
  display: flex;
  flex: 1;
  align-items: flex-start;
  gap: 20px;
  padding: 168px 85px 0 87px;
`;

const PathInput = styled.input`
  flex: 1;
  height: 52px;
  border: 1px solid #f4f2f4;
  border-bottom: 2px solid #929194;
  background: #fefefe;
`;

const BrowseButton = styled.button`
  width: 180px;
  height: 54px;
  border: 1px solid #f3f1f4;
  border-radius: 6px;
  color: #858487;
`;

const WizardFooter = styled.footer`
  display: flex;
  justify-content: flex-end;
  gap: 20px;
  padding: 20px 22px;
  background: #f1eff2;
`;

const NextButton = styled.button`
  width: 174px;
  height: 44px;
  border: 1px solid #edebed;
  border-radius: 6px;
  background: #f4f3f5;
  color: #9c9b9e;
`;

const CancelButton = styled.button`
  width: 129px;
  height: 44px;
  border: 1px solid #d0ced1;
  border-radius: 6px;
  background: #fefefe;
  color: #2d2c2e;
`;

/* copy progress */

const CopyFrame = styled(Frame)`
  top: 308px;
  left: 206px;
  width: 897px;
  box-shadow: 0 40px 68px rgba(0, 0, 0, 0.34);
`;

const CopyTitleBar = styled.div`
  display: flex;
  align-items: center;
  gap: 7px;
  height: 56px;
  padding-left: 14px;
`;

const CopyBody = styled.div`
  padding: 24px 54px 30px 52px;
  border-bottom: 2px solid #e6e4e7;
`;

const CopySummary = styled.p`
  font-family: "Noto Sans CJK SC", sans-serif;
  font-size: 25px;

  a {
    color: #3b82bf;
  }
`;

const CopyStatus = styled.div`
  display: flex;
  justify-content: space-between;
  font-size: 32px;
  line-height: 50px;
  color: #262527;
`;

const CopyActions = styled.div`
  display: flex;
  gap: 78px;
  padding-right: 9px;
`;

const ProgressTrack = styled.div`
  height: 32px;
  margin-top: 12px;
  border: 2px solid #c4c3c5;
  background: #e9e7ea;
`;

const ProgressFill = styled.div`
  height: 100%;
  background: linear-gradient(90deg, #17cc2a 16%, #7af07a 29%, #17cc2a 42%);
`;

const DetailsButton = styled.button`
  display: flex;
  align-items: center;
  gap: 21px;
  height: 88px;
  padding-left: 60px;
`;

const PointerStyled = styled.div`
  position: absolute;
  top: 683px;
  left: 1241px;
`;

/* taskbar */

const TaskbarStyled = styled.footer`
  display: flex;
  flex-shrink: 0;
  align-items: center;
  height: 95px;
  background: linear-gradient(90deg, #e4effa, #dfe3f7 30%, #dadcf4 55%, #dcdff4 78%, #e5edfa 88%, #e6ecf9);
`;

const TaskButton = styled(PlainButton)`
  position: relative;
  flex-shrink: 0;
  width: 72px;
  height: 78px;
  margin-right: 16px;
  border-radius: 6px;
  background: ${(p) => (p.$active ? "rgba(255, 255, 255, 0.85)" : "none")};

  &:first-child {
    margin-left: -10px;
  }

  ${(p) =>
    p.$running &&
    css`
      &::after {
        content: "";
        position: absolute;
        bottom: 1px;
        width: ${p.$active ? 32 : 12}px;
        height: 6px;
        border-radius: 3px;
        background: #83858f;
      }
    `}
`;

const Tray = styled.div`
  display: flex;
  align-items: center;
  flex-shrink: 0;
  height: 100%;
  margin: 0 -42px 0 auto;
  color: #202024;
`;

const TrayButton = styled(PlainButton)`
  width: 62px;
`;

const LanguageButton = styled.button`
  width: 76px;
  font-size: 30px;
`;

const SystemButton = styled(PlainButton)`
  gap: 14px;
  padding: 0 28px 0 22px;
`;

const ClockButton = styled.button`
  display: flex;
  flex-direction: column;
  font-family: "Noto Sans CJK SC", sans-serif;
  line-height: 30px;
  text-align: right;
`;

export default App;
